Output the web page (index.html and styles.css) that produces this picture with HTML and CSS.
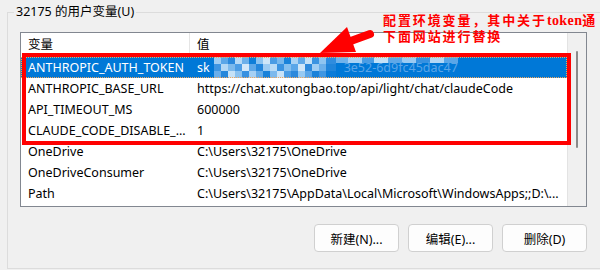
FILE: index.html
```html
<!DOCTYPE html>
<html lang="zh-CN">
<head>
  <meta charset="UTF-8">
  <meta name="viewport" content="width=device-width, initial-scale=1.0">
  <title>环境变量</title>
  <link rel="stylesheet" href="styles.css">
</head>
<body>
  <div class="screen">
    <fieldset class="group">
      <legend>32175 的用户变量(U)</legend>
      <div class="list">
        <div class="list-main">
          <div class="row head">
            <span class="name">变量</span>
            <span class="value">值</span>
          </div>
          <div class="row selected">
            <span class="name">ANTHROPIC_AUTH_TOKEN</span>
            <span class="value">sk<span class="mosaic"></span><span class="faded">3e52-6d9fc45dac47</span></span>
          </div>
          <div class="row">
            <span class="name">ANTHROPIC_BASE_URL</span>
            <span class="value">https://chat.xutongbao.top/api/light/chat/claudeCode</span>
          </div>
          <div class="row">
            <span class="name">API_TIMEOUT_MS</span>
            <span class="value">600000</span>
          </div>
          <div class="row">
            <span class="name">CLAUDE_CODE_DISABLE_...</span>
            <span class="value">1</span>
          </div>
          <div class="row">
            <span class="name">OneDrive</span>
            <span class="value">C:\Users\32175\OneDrive</span>
          </div>
          <div class="row">
            <span class="name">OneDriveConsumer</span>
            <span class="value">C:\Users\32175\OneDrive</span>
          </div>
          <div class="row">
            <span class="name">Path</span>
            <span class="value">C:\Users\32175\AppData\Local\Microsoft\WindowsApps;;D:\...</span>
          </div>
        </div>
        <div class="scrollbar"><div class="thumb"></div></div>
      </div>
      <div class="buttons">
        <button type="button">新建(N)...</button>
        <button type="button">编辑(E)...</button>
        <button type="button">删除(D)</button>
      </div>
    </fieldset>

    <!-- annotation drawn over the screenshot -->
    <div class="mark-box"></div>
    <svg class="mark-arrow" width="70" height="40" viewBox="0 0 70 40">
      <polygon points="10,33 37,7 46,32" fill="#ff0000"/>
      <line x1="38" y1="22" x2="60" y2="14" stroke="#ff0000" stroke-width="8" stroke-linecap="round"/>
    </svg>
    <div class="mark-text">
      <div>配置环境变量，其中关于<span class="latin">token</span>通</div>
      <div>下面网站进行替换</div>
    </div>
  </div>
</body>
</html>
```

FILE: styles.css
```css
body {
  margin: 0;
  padding: 0;
  background-color: #f0f0f0;
  font-family: "Noto Sans", "Noto Sans CJK SC", sans-serif;
  font-size: 12.5px;
  color: #000;
  overflow: hidden;
}

.screen {
  position: relative;
  width: 600px;
  height: 270px;
  overflow: hidden;
}

.group {
  margin: 4px 0 0 7px;
  padding: 0 0 16px 0;
  border: 1px solid #dcdcdc;
  width: 640px;
  min-width: 0;
}

.group legend {
  margin-left: 6px;
  padding: 0 2px;
  line-height: 16px;
}

.list {
  display: flex;
  width: 565px;
  margin: 12px 0 0 12px;
  border: 1px solid #828790;
  background: #fff;
}

.list-main {
  width: 546px;
  padding-bottom: 2px;
}

.row {
  display: grid;
  grid-template-columns: 169px 1fr;
  height: 21px;
  line-height: 21px;
  white-space: nowrap;
  overflow: hidden;
}

.row .name {
  padding-left: 7px;
  overflow: hidden;
}

.row .value {
  padding-left: 7px;
  overflow: hidden;
}

.row.head {
  height: 24px;
  line-height: 24px;
}

.row.head .name {
  border-right: 1px solid #e5e5e5;
}

.row.selected {
  background: #0078d7;
  color: #fff;
  outline: 1px dotted #f3a65a;
  outline-offset: -1px;
}

.mosaic {
  display: inline-block;
  width: 126px;
  height: 21px;
  vertical-align: top;
  background:
    linear-gradient(90deg, #0078d7 0 4px, #9fcdf3 4px 11px, #5aa6e8 11px 18px, #2a88dc 18px 25px, #b7daf6 25px 32px, #6cb0ea 32px 39px, #0f7ed8 39px 46px, #8cc3f0 46px 53px, #cfe6f8 53px 60px, #4a9ce4 60px 67px, #79b8ec 67px 74px, #1a83da 74px 81px, #a9d2f4 81px 88px, #5ea8e8 88px 95px, #c4e1f7 95px 102px, #3a93e1 102px 109px, #8ec4f0 109px 116px, #2f8cde 116px 126px) 0 0 / 100% 7px no-repeat,
    linear-gradient(90deg, #0078d7 0 4px, #3d95e2 4px 11px, #b2d7f5 11px 18px, #7bb9ec 18px 25px, #4c9de5 25px 32px, #d3e8f9 32px 39px, #5ea8e8 39px 46px, #2486db 46px 53px, #9ccbf2 53px 60px, #b9dbf6 60px 67px, #3a93e1 67px 74px, #86c0ef 74px 81px, #5aa6e8 81px 88px, #cfe6f8 88px 95px, #2c89dc 95px 102px, #9fcdf3 102px 109px, #6aafea 109px 116px, #1f84da 116px 126px) 0 7px / 100% 7px no-repeat,
    linear-gradient(90deg, #0078d7 0 4px, #6aaeea 4px 11px, #2486db 11px 18px, #c6e2f7 18px 25px, #8ac2f0 25px 32px, #3891e0 32px 39px, #a6d0f4 39px 46px, #63abe9 46px 53px, #1a82d9 53px 60px, #7db9ed 60px 67px, #c9e3f8 67px 74px, #4a9ce4 74px 81px, #2c89dc 81px 88px, #96c9f2 88px 95px, #5aa6e8 95px 102px, #1a82d9 102px 109px, #3f96e2 109px 116px, #0a7bd8 116px 126px) 0 14px / 100% 7px no-repeat;
}

.faded {
  display: inline-block;
  padding-left: 8px;
  color: #5ba5e7;
  background: linear-gradient(90deg, #6fb2eb 0 12px, #a9d2f4 12px 26px, #4a9ce4 26px 38px, #c4e1f7 38px 52px, #5ea8e8 52px 66px, #9ccbf2 66px 80px, #3891e0 80px 94px, #b3d7f5 94px 108px, #5aa6e8 108px 122px, #0078d7 122px) 0 0 / 100% 6px no-repeat;
}

.scrollbar {
  width: 18px;
  border-left: 1px solid #e3e3e3;
  background: #f0f0f0;
  display: flex;
  justify-content: center;
}

.thumb {
  width: 2px;
  height: 97px;
  margin-top: 18px;
  border-radius: 1px;
  background: #8a8a8a;
}

.buttons {
  display: flex;
  justify-content: flex-end;
  gap: 9px;
  width: 567px;
  margin: 17px 0 0 12px;
}

.buttons button {
  width: 85px;
  height: 28px;
  padding: 0;
  border: 1px solid #d0d0d0;
  border-radius: 4px;
  background: #fdfdfd;
  font-family: inherit;
  font-size: 12.5px;
  color: #000;
}

.mark-box {
  position: absolute;
  left: 22px;
  top: 53px;
  width: 549px;
  height: 92px;
  box-sizing: border-box;
  border: 4px solid #ff0000;
}

.mark-arrow {
  position: absolute;
  left: 310px;
  top: 20px;
}

.mark-text {
  position: absolute;
  left: 383px;
  top: 12px;
  font-family: "Noto Sans CJK SC", sans-serif;
  font-size: 13px;
  font-weight: 700;
  letter-spacing: 1.9px;
  line-height: 15px;
  color: #ff0000;
  white-space: nowrap;
}

.mark-text .latin {
  font-family: "Liberation Serif", serif;
  font-size: 14px;
  letter-spacing: 0.4px;
}
```
